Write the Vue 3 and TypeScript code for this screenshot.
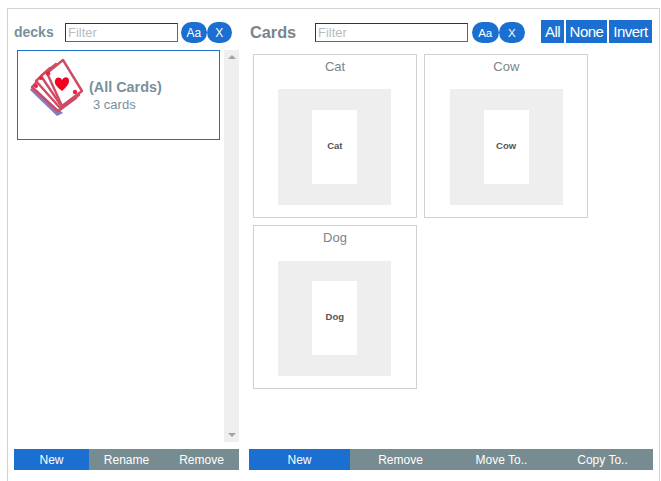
<script setup lang="ts">
const cards: string[] = ['Cat', 'Cow', 'Dog']
const cardActions: string[] = ['Remove', 'Move To..', 'Copy To..']
const selectors: string[] = ['All', 'None', 'Invert']
</script>

<template>
  <div class="page">
    <main class="frame">
      <section class="column decks">
        <header class="head">
          <h2 class="title deck-title">decks</h2>
          <input class="filter deck-filter" placeholder="Filter" />
          <div class="pills">
            <button class="pill">Aa</button>
            <button class="pill">X</button>
          </div>
        </header>
        <div class="deck-body">
          <div class="deck-list">
            <div class="deck">
              <svg class="deck-icon" viewBox="30 58 54 58" width="54" height="58">
                <g stroke-linejoin="round" stroke="#cf4a62" stroke-width="2.400" fill="#fff">
                  <polygon points="30,90 57,116 63,113 33,86" fill="#8a78c0" stroke="none" />
                  <polygon points="32,87 46,72 72,100 58,111" />
                  <polygon points="36,81 50,68 76,98 61,109" />
                  <polygon points="41,76 56,64 79,95 62,107" />
                  <polygon points="47,73 63,60 82,91 62,106" />
                </g>
                <path d="M62 91 C57 87 54 84 55 80.500 C56 77 60 76.500 62 80 C64 76 68.500 76.500 69 80 C69.500 84 66 87.500 62 91 Z" fill="#f5001e" />
                <g fill="#f0203a">
                  <circle cx="48" cy="73.500" r="2.200" />
                  <circle cx="41" cy="78" r="2" />
                  <circle cx="36" cy="86" r="2" />
                  <circle cx="75" cy="92" r="2.200" />
                </g>
              </svg>
              <div class="deck-text">
                <div class="deck-name">(All Cards)</div>
                <div class="deck-count">3 cards</div>
              </div>
            </div>
          </div>
          <div class="scrollbar">
            <span class="arrow up"></span>
            <span class="arrow down"></span>
          </div>
        </div>
        <footer class="actions">
          <button class="act primary">New</button>
          <button class="act">Rename</button>
          <button class="act">Remove</button>
        </footer>
      </section>

      <section class="column cards">
        <header class="head">
          <h2 class="title card-title">Cards</h2>
          <input class="filter card-filter" placeholder="Filter" />
          <div class="pills">
            <button class="pill">Aa</button>
            <button class="pill">X</button>
          </div>
          <div class="selectors">
            <button v-for="s in selectors" :key="s" class="sel" :class="'sel-' + s.toLowerCase()">{{ s }}</button>
          </div>
        </header>
        <div class="card-body">
          <article v-for="c in cards" :key="c" class="card">
            <div class="card-name">{{ c }}</div>
            <div class="preview">
              <div class="face">{{ c }}</div>
            </div>
          </article>
        </div>
        <footer class="actions">
          <button class="act primary">New</button>
          <button v-for="a in cardActions" :key="a" class="act">{{ a }}</button>
        </footer>
      </section>
    </main>
  </div>
</template>

<style>
html, body { margin: 0; overflow: hidden; background: #fff; }
</style>

<style scoped>
* { box-sizing: border-box; font-family: "Liberation Sans", Arial, sans-serif; }
.page { padding: 8px 0 0 7px; width: 661px; height: 481px; overflow: hidden; }
.frame {
  width: 653px;
  height: 480px;
  border: 1px solid #d3d3d3;
  padding: 11px 6px 0 6px;
  display: flex;
  gap: 10px;
}
.column { display: flex; flex-direction: column; height: 450px; }
.decks { width: 225px; }
.cards { width: 404px; }
.head { height: 30px; display: flex; align-items: flex-start; flex: none; }
.head > * { flex: none; }
.title { margin: 0; font-weight: 700; color: #78909c; line-height: 24px; }
.deck-title { font-size: 14px; width: 51px; }
.card-title { font-size: 16.300px; width: 65px; margin-left: 1px; line-height: 24px; color: #78868c; }
.filter {
  height: 19px;
  margin-top: 3px;
  border: 1px solid;
  border-color: #333 #666 #666 #333;
  padding: 0 2px;
  font-size: 13px;
  outline: none;
  background: #fff;
}
.filter::placeholder { color: #b8bcc0; }
.deck-filter { width: 113px; }
.card-filter { width: 153px; }
.pills { display: flex; margin: 2px 0 0 3px; }
.cards .pills { margin-left: 4px; }
.pill {
  width: 25.500px;
  height: 21px;
  border: none;
  border-radius: 11px;
  background: #1a6fd0;
  color: #fff;
  font-size: 12px;
  padding: 0;
}
.cards .pill { width: 26.500px; font-size: 11.500px; }
.selectors { display: flex; gap: 2px; margin-left: 16px; }
.sel {
  height: 23px;
  border: none;
  background: #1a6fd0;
  color: #fff;
  font-size: 15px;
  letter-spacing: -0.5px;
  padding: 0;
  flex: none;
}
.sel-all { width: 23px; }
.sel-none { width: 41px; }
.sel-invert { width: 43px; }
.deck-body { flex: none; height: 392px; display: flex; justify-content: space-between; }
.deck-list { width: 206px; padding-left: 3px; }
.deck {
  width: 203px;
  height: 90px;
  border: 1px solid #1a6fd0;
  display: flex;
  align-items: center;
  padding-left: 12px;
}
.deck-icon { flex: none; margin-top: -16px; }
.deck-text { margin-left: 5px; }
.deck-name { font-size: 14.400px; font-weight: 700; color: #78909c; line-height: 18px; }
.deck-count { font-size: 13px; color: #78909c; line-height: 17px; padding-left: 4px; }
.scrollbar {
  width: 15px;
  background: #efefef;
  display: flex;
  flex-direction: column;
  justify-content: space-between;
  align-items: center;
  padding: 5px 0;
}
.arrow { width: 0; height: 0; border-left: 4px solid transparent; border-right: 4px solid transparent; }
.up { border-bottom: 4px solid #a3a3a3; }
.down { border-top: 4px solid #a3a3a3; }
.card-body {
  flex: none;
  height: 392px;
  padding: 4px 0 0 4px;
  display: flex;
  flex-wrap: wrap;
  align-content: flex-start;
  gap: 7.400px 7.300px;
}
.card {
  width: 164px;
  height: 164px;
  border: 1px solid #d0d0d0;
  display: flex;
  flex-direction: column;
  align-items: center;
}
.card-name { font-size: 13px; color: #78868c; line-height: 15px; margin-top: 4px; height: 30.300px; }
.preview {
  width: 113px;
  height: 115.600px;
  margin-right: 0.400px;
  background: #eee;
  display: flex;
  align-items: center;
  justify-content: center;
}
.face {
  width: 45px;
  height: 74px;
  padding-bottom: 3px;
  background: #fff;
  display: flex;
  align-items: center;
  justify-content: center;
  font-size: 9.500px;
  font-weight: 700;
  color: #555;
}
.actions { display: flex; height: 21px; margin-top: 7px; flex: none; background: #778c91; }
.act {
  flex: 1 1 0;
  border: none;
  background: #778c91;
  color: #fff;
  font-size: 12px;
  padding: 0;
}
.act.primary { background: #1a6fd0; }
</style>
